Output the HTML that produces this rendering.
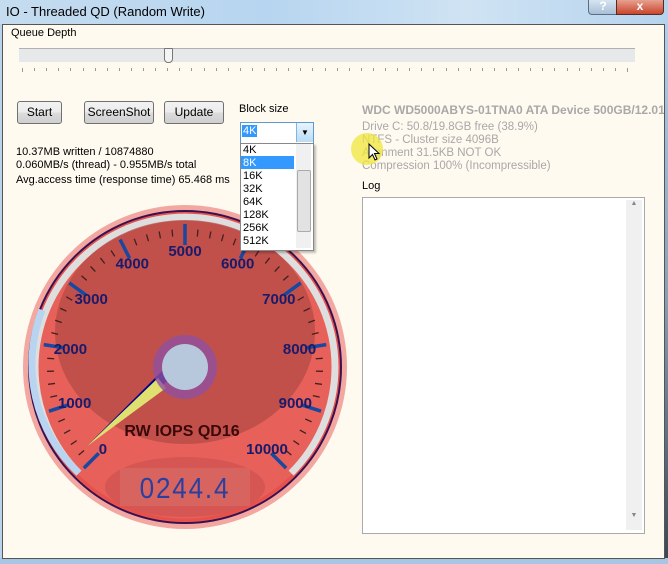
<!DOCTYPE html>
<html><head><meta charset="utf-8"><style>
body{margin:0;width:668px;height:564px;overflow:hidden;background:#a9cbe8;font-family:"Liberation Sans",sans-serif;font-size:11px;color:#000;position:relative}
.abs{position:absolute}
.btn{position:absolute;height:21px;border:1px solid #707070;border-radius:3px;background:linear-gradient(#f2f2f2,#ebebeb 50%,#dcdcdc 51%,#cfcfcf);text-align:center;line-height:21px;font-size:12px}
.g{color:#a8a8a8;font-size:12px}
.dd{z-index:5}
</style></head><body>
<div class="abs" style="left:0;top:0;width:668px;height:24px;background:linear-gradient(90deg,#c5dcef,#b7d5f0 40%,#cfe3f3 70%,#b6d3ee)"></div>
<div class="abs" style="left:6px;top:4px;font-size:13px">IO - Threaded QD (Random Write)</div>
<div class="abs" style="left:588px;top:0;width:28px;height:14px;border:1px solid #5a6e82;border-top:none;border-radius:0 0 0 4px;background:linear-gradient(#d6e4f0,#a9bfd6);color:#fff;font-weight:bold;text-align:center;font-size:12px;line-height:13px">?</div>
<div class="abs" style="left:616px;top:0;width:46px;height:14px;border:1px solid #5a2a22;border-top:none;border-radius:0 0 4px 0;background:linear-gradient(#e7a08f,#c9452d);color:#fff;font-weight:bold;text-align:center;font-size:12px;line-height:13px">x</div>
<div class="abs" style="left:664px;top:24px;width:4px;height:540px;background:linear-gradient(#b0d0ee,#8aa0b4 50%,#3a4650)"></div>
<div class="abs" style="left:0;top:24px;width:3px;height:540px;background:#b9d3ec"></div>
<div class="abs" style="left:0;top:558px;width:668px;height:6px;background:#a8c6e4"></div>
<div class="abs" style="left:2px;top:24px;width:661px;height:533px;background:#fffaf0;border:1px solid #555"></div>
<svg class="abs" style="left:0;top:0" width="668" height="564" id="gauge">
<circle cx="185" cy="367" r="162" fill="#f2a8a0"/>
<circle cx="185" cy="367" r="156" fill="#e8605a" stroke="#3a1050" stroke-width="2"/>
<circle cx="185" cy="367" r="153" fill="none" stroke="#e8504a" stroke-width="3"/>
<path d="M 78.9 473.1 A 150 150 0 1 1 291.1 473.1" fill="none" stroke="#dedede" stroke-width="7"/>
<path d="M 78.9 473.1 A 150 150 0 0 1 42 310" fill="none" stroke="#b8d4f0" stroke-width="7"/>
<ellipse cx="185" cy="332" rx="130" ry="112" fill="#b04a44" opacity=".7"/>
<g id="tk"></g>
<path d="M 185 367 L 86 447 L 175 358 Z" fill="#00008a"/>
<path d="M 86 447 L 158 378 L 166 388 Z" fill="#e0e070"/>
<circle cx="185" cy="367" r="32" fill="#9050a0" opacity=".8"/>
<circle cx="185" cy="367" r="23" fill="#b8c8dc"/>
<text x="182" y="436" font-family="Liberation Sans" font-weight="bold" font-size="16" fill="#3a0808" text-anchor="middle">RW IOPS QD16</text>
<ellipse cx="185" cy="487" rx="80" ry="30" fill="#d05450" opacity=".8"/>
<rect x="120" y="468" width="130" height="38" fill="#d86864" opacity=".8"/>
<text x="185" y="498" font-family="Liberation Sans" font-size="29" fill="#2a40a0" text-anchor="middle" letter-spacing="2" transform="translate(185 0) scale(0.9 1) translate(-185 0)">0244.4</text>
</svg>
<div class="abs" style="left:11px;top:27px;font-size:11px">Queue Depth</div>
<div class="abs" style="left:19px;top:48px;width:616px;height:13px;background:#e6e8e9;border-top:1px solid #b0b0b0"></div>
<div class="abs" style="left:164px;top:48px;width:7px;height:13px;background:#f4f4f4;border:1px solid #777;border-radius:1px 1px 4px 4px"></div>
<div class="abs" id="ticks" style="left:0;top:68px"></div>
<div class="btn" style="left:17px;top:101px;width:43px">Start</div>
<div class="btn" style="left:84px;top:101px;width:68px">ScreenShot</div>
<div class="btn" style="left:164px;top:101px;width:58px">Update</div>
<div class="abs" style="left:239px;top:103px;font-size:11px">Block size</div>
<div class="abs dd" style="left:240px;top:122px;width:72px;height:20px;background:#fff;border:1px solid #5b9bd5"></div>
<div class="abs dd" style="left:242px;top:125px;background:#3399ff;color:#fff;font-size:11px;padding:0 1px">4K</div>
<div class="abs dd" style="left:296px;top:123px;width:16px;height:19px;background:linear-gradient(#e8f4fc,#b9dcf5);border-left:1px solid #7eb4ea;font-size:8px;text-align:center;line-height:19px">▼</div>
<div class="abs dd" style="left:240px;top:143px;width:72px;height:106px;background:#fff;border:1px solid #888;box-shadow:2px 2px 2px rgba(0,0,0,.25)"></div>
<div class="abs dd" style="left:241px;top:156px;width:53px;height:13px;background:#3399ff"></div>
<div class="abs dd" style="left:243px;top:144px;font-size:11px;line-height:13px">4K<br><span style="color:#fff">8K</span><br>16K<br>32K<br>64K<br>128K<br>256K<br>512K</div>
<div class="abs dd" style="left:296px;top:144px;width:15px;height:104px;background:#f0f0f0"></div>
<div class="abs dd" style="left:297px;top:170px;width:12px;height:60px;background:#e2e2e2;border:1px solid #aaa;border-radius:2px"></div>
<div class="abs" style="left:16px;top:146px;font-size:11px;line-height:13px">10.37MB written / 10874880<br>0.060MB/s (thread) - 0.955MB/s total<br><span style="line-height:16px">Avg.access time (response time) 65.468 ms</span></div>
<div class="abs g" style="left:362px;top:103px;font-weight:bold;white-space:nowrap;width:302px;overflow:hidden">WDC WD5000ABYS-01TNA0 ATA Device 500GB/12.010</div>
<div class="abs g" style="left:362px;top:121px;line-height:13px;font-size:11.5px">Drive C: 50.8/19.8GB free (38.9%)<br>NTFS - Cluster size 4096B<br>Alignment 31.5KB NOT OK<br>Compression 100% (Incompressible)</div>
<div class="abs" style="left:351px;top:133px;width:32px;height:32px;border-radius:50%;background:rgba(240,230,60,.75)"></div>
<svg class="abs" style="left:368px;top:143px" width="14" height="20"><path d="M1 1 L1 15 L4.5 11.5 L7 17 L9 16 L6.5 10.5 L11 10.5 Z" fill="#fff" stroke="#000"/></svg>
<div class="abs" style="left:362px;top:180px;font-size:11px">Log</div>
<div class="abs" style="left:362px;top:197px;width:281px;height:335px;background:#fff;border:1px solid #aaa"></div>
<div class="abs" style="left:626px;top:200px;width:16px;height:330px;background:#f0f0f0;color:#888;font-size:7px;text-align:center">▲<div style="margin-top:305px">▼</div></div>
<script>
var t=document.getElementById('ticks'),h='';
for(var i=0;i<=50;i++){var x=22+i*12.1;h+='<div style="position:absolute;left:'+x.toFixed(1)+'px;top:0;width:1px;height:'+(i==0||i==50?4:3)+'px;background:#999"></div>';}
t.innerHTML=h;
var g=document.getElementById('tk'),s='',cx=185,cy=367;
for(var v=0;v<=10000;v+=200){var a=(-135+27*v/1000)*Math.PI/180,sn=Math.sin(a),cs=Math.cos(a);
 if(v%1000==0){s+='<line x1="'+(cx+122*sn)+'" y1="'+(cy-122*cs)+'" x2="'+(cx+143*sn)+'" y2="'+(cy-143*cs)+'" stroke="#1848a0" stroke-width="3.5"/>';
 s+='<text x="'+(cx+116*sn)+'" y="'+(cy-116*cs+5)+'" font-family="Liberation Sans" font-weight="bold" font-size="15" fill="#1a1a6a" text-anchor="middle">'+v+'</text>';}
 else s+='<line x1="'+(cx+131*sn)+'" y1="'+(cy-131*cs)+'" x2="'+(cx+138*sn)+'" y2="'+(cy-138*cs)+'" stroke="#402020" stroke-width="1.3"/>';}
g.innerHTML=s;
</script>
</body></html>
